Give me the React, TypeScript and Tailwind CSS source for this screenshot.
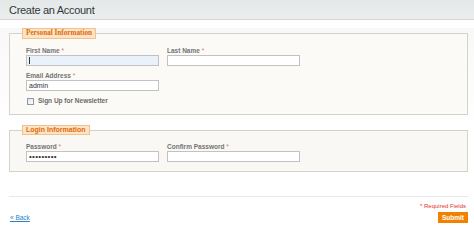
import { useState } from "react";

function Field({
  label,
  value = "",
  type = "text",
  focused = false,
}: {
  label: string;
  value?: string;
  type?: string;
  focused?: boolean;
}) {
  const [v, setV] = useState(value);
  return (
    <div className="flex flex-col">
      <label className="h-[9px] text-[6.5px] leading-[9px] font-bold text-[#747474]">
        {label} <span className="text-[#e0736b] font-normal">*</span>
      </label>
      <div className="relative">
        <input
          type={type}
          value={v}
          onChange={(e) => setV(e.target.value)}
          className={`block h-[11px] w-full border border-[#c2c2c2] px-[2px] leading-[9px] text-[#333] outline-none ${
            focused ? "bg-[#e9f1fb] border-[#b3c0cc]" : "bg-white"
          } ${type === "password" ? "text-[8px] tracking-[0.3px]" : "text-[7px]"}`}
        />
        {focused && <span className="absolute left-[3px] top-[2px] h-[7px] w-px bg-[#333]" />}
      </div>
    </div>
  );
}

export default function App() {
  return (
    <div className="w-[474px] h-[249px] bg-white font-['Liberation_Sans',Arial,sans-serif] overflow-hidden">
      <div className="h-[20px] bg-gradient-to-b from-[#e4e8e8] to-[#eceeed] border-b border-[#d2d6d5] pl-[9px] pr-[6px]">
        <h1 className="text-[11px] leading-[20px] text-[#2f3a3c] tracking-[-0.3px]">Create an Account</h1>
      </div>

      <div className="pl-[9px] pr-[6px] bg-gradient-to-b from-[#f7f8f7] via-white to-white">
        <fieldset className="mt-[8px] border border-[#d6d2c9] bg-[#fbfaf6]">
          <legend className="ml-[12px] h-[11px] px-[3px] bg-[#fbe5c6] border border-[#f2c28c] text-[7.2px] leading-[9px] font-bold text-[#e06a0c] font-['Liberation_Serif',serif]">
            Personal Information
          </legend>
          <div className="px-[16px] pt-[7px] pb-[9px]">
            <div className="grid grid-cols-[133px_133px] gap-x-[8px] gap-y-[5px]">
              <Field label="First Name" focused />
              <Field label="Last Name" />
              <Field label="Email Address" value="admin" />
            </div>
            <label className="mt-[6px] flex items-center gap-[4px] h-[8px]">
              <span className="ml-[1px] w-[7px] h-[7px] border border-[#8a9aa8] bg-gradient-to-br from-[#dfe5ea] to-white" />
              <span className="text-[6.5px] font-bold text-[#6a6a6a]">Sign Up for Newsletter</span>
            </label>
          </div>
        </fieldset>

        <fieldset className="mt-[10px] border border-[#d6d2c9] bg-[#f9f8f4]">
          <legend className="ml-[12px] h-[10px] px-[3px] bg-[#fbe5c6] border border-[#f2c28c] text-[7px] leading-[8px] font-bold text-[#e06a0c]">
            Login Information
          </legend>
          <div className="px-[16px] pt-[7px] pb-[9px]">
            <div className="grid grid-cols-[133px_133px] gap-x-[8px]">
              <Field label="Password" type="password" value="123123123" />
              <Field label="Confirm Password" type="password" />
            </div>
          </div>
        </fieldset>

        <div className="mt-[24px] border-t border-[#e6e9ea] pt-[5px] pr-[2px] text-right text-[6px] leading-[8px] text-[#e3352a]">
          * Required Fields
        </div>
        <div className="mt-[2px] flex items-center justify-between">
          <a href="#" className="pl-[1px] text-[6.5px] text-[#2a7fc6] underline">
            « Back
          </a>
          <button className="h-[11px] w-[30px] bg-[#f18200] text-[6.5px] font-bold text-white leading-[11px]">
            Submit
          </button>
        </div>
      </div>
    </div>
  );
}
